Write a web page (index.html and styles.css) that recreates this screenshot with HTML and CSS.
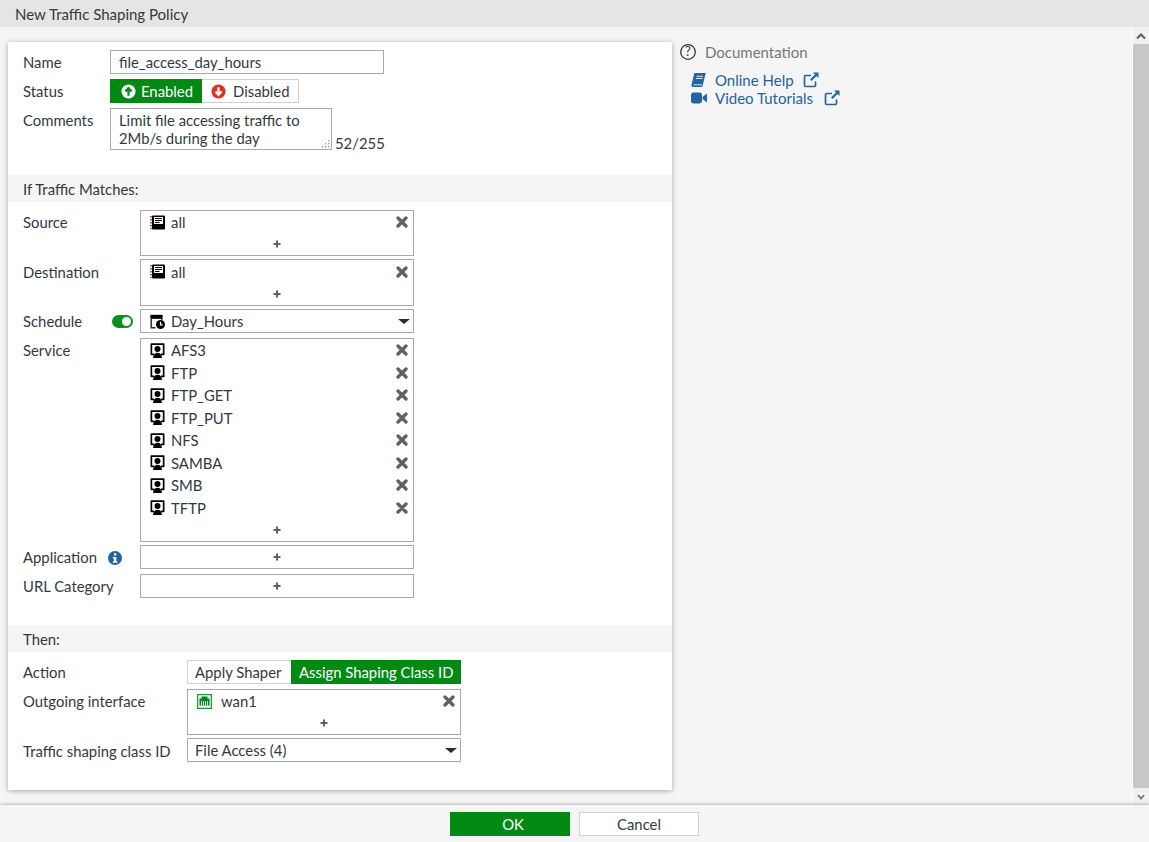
FILE: index.html
```html
<!DOCTYPE html>
<html lang="en">
<head>
<meta charset="utf-8">
<title>New Traffic Shaping Policy</title>
<link rel="stylesheet" href="styles.css">
</head>
<body>
<svg class="defs" width="0" height="0" aria-hidden="true">
  <symbol id="i-x" viewBox="0 0 12 12"><path d="M2 2 10 10M10 2 2 10" fill="none" stroke="#5c6268" stroke-width="3.300" stroke-linecap="round"/></symbol>
  <symbol id="i-plus" viewBox="0 0 8 8"><path d="M4 .5v7M.5 4h7" fill="none" stroke="#5c6268" stroke-width="2"/></symbol>
  <symbol id="i-addr" viewBox="0 0 15 15"><rect x="2" y="0.500" width="13" height="14" rx="1" fill="#000"/><rect x="4" y="2" width="9" height="7" fill="#fff"/><path d="M5 3.500h7M5 5.500h7M5 7.500h4.500" stroke="#000" stroke-width="1"/><path d="M1 1v13" stroke="#a020a0" stroke-width="1.600" stroke-dasharray="1.600 1.400"/></symbol>
  <symbol id="i-svc" viewBox="0 0 15 15"><path d="M.5 1a.8.8 0 0 1 .8-.8h12.400a.8.8 0 0 1 .8.8v10.500a.8.8 0 0 1-.8.8H11V10.500h1.800V2H2.200v8.500H4v1.800H1.300a.8.8 0 0 1-.8-.8z" fill="#000"/><circle cx="7.500" cy="6" r="3" fill="#000"/><path d="M3 15c.3-3.600 2-5.300 4.500-5.300S11.700 11.400 12 15z" fill="#000"/></symbol>
  <symbol id="i-sch" viewBox="0 0 15 15"><path d="M.5 1.500h12v5h-1.400V5H1.900v8h3.500v1.400H.5z" fill="#2a1a4a"/><rect x=".5" y=".8" width="12" height="3" fill="#000"/><circle cx="10.500" cy="10.500" r="4.500" fill="#000"/><path d="M10.500 7.800v3h2.200" fill="none" stroke="#fff" stroke-width="1.200"/></symbol>
  <symbol id="i-wan" viewBox="0 0 15 15"><rect x=".6" y=".6" width="13.800" height="13.800" fill="#e8f7ea" stroke="#1d9a33" stroke-width="1.200"/><path d="M2.500 11.500V4.500h2v-2h6v2h2v7z" fill="#0f7f24"/><path d="M4.500 7v4.500M6.500 7v4.500M8.500 7v4.500M10.500 7v4.500" stroke="#d8f0dc" stroke-width=".9"/></symbol>
  <symbol id="i-ext" viewBox="0 0 16 16"><path d="M12.500 9.500v3.500a1.500 1.500 0 0 1-1.500 1.500H3A1.500 1.500 0 0 1 1.500 13V5A1.500 1.500 0 0 1 3 3.500h5" fill="none" stroke="#22659f" stroke-width="1.700"/><path d="M10 .5h5.500V6l-2-2-5 5-1.500-1.500 5-5z" fill="#22659f"/></symbol>
</svg>

<header class="titlebar">New Traffic Shaping Policy</header>

<div class="main">
  <form class="card">
    <section class="block block-top">
      <div class="row gap5">
        <label class="lbl">Name</label>
        <input class="field name-input" type="text" value="file_access_day_hours">
      </div>
      <div class="row gap5">
        <span class="lbl">Status</span>
        <div class="seg">
          <span class="seg-btn on status-on">
            <svg class="seg-ico" viewBox="0 0 16 16"><circle cx="8" cy="8" r="7.500" fill="#fff"/><path d="M8 12.500V5M4.700 8 8 4.500 11.300 8" fill="none" stroke="#008a14" stroke-width="2.400"/></svg>
            Enabled</span>
          <span class="seg-btn status-off">
            <svg class="seg-ico" viewBox="0 0 16 16"><circle cx="8" cy="8" r="7.500" fill="#dc3020"/><path d="M8 3.500V11M4.700 8 8 11.500 11.300 8" fill="none" stroke="#fff" stroke-width="2.400"/></svg>
            Disabled</span>
        </div>
      </div>
      <div class="row">
        <label class="lbl">Comments</label>
        <div class="comment-wrap">
          <div class="comment-box">
            <textarea class="field comment">Limit file accessing traffic to 2Mb/s during the day</textarea>
            <svg class="grip" viewBox="0 0 9 9"><path d="M7 1h1.400v1.400H7zM4 4h1.400v1.400H4zM7 4h1.400v1.400H7zM1 7h1.400v1.400H1zM4 7h1.400v1.400H4zM7 7h1.400v1.400H7z" fill="#a0a0a0"/></svg>
          </div>
          <span class="count">52/255</span>
        </div>
      </div>
    </section>

    <h2 class="bar bar-match">If Traffic Matches:</h2>
    <section class="block block-match">
      <div class="row gap3">
        <span class="lbl">Source</span>
        <div class="multi h46">
          <div class="item"><svg class="ico"><use href="#i-addr"/></svg><span class="item-name">all</span><svg class="x"><use href="#i-x"/></svg></div>
          <div class="add"><svg class="plus"><use href="#i-plus"/></svg></div>
        </div>
      </div>
      <div class="row gap3">
        <span class="lbl lbl-low">Destination</span>
        <div class="multi h47">
          <div class="item item-low"><svg class="ico"><use href="#i-addr"/></svg><span class="item-name">all</span><svg class="x"><use href="#i-x"/></svg></div>
          <div class="add"><svg class="plus"><use href="#i-plus"/></svg></div>
        </div>
      </div>
      <div class="row gap5">
        <span class="lbl lbl-extra">Schedule <span class="toggle"></span></span>
        <div class="select"><svg class="ico"><use href="#i-sch"/></svg><span class="item-name">Day_Hours</span><span class="caret"></span></div>
      </div>
      <div class="row gap3">
        <span class="lbl">Service</span>
        <div class="multi h204">
          <div class="item"><svg class="ico"><use href="#i-svc"/></svg><span class="item-name">AFS3</span><svg class="x"><use href="#i-x"/></svg></div>
          <div class="item"><svg class="ico"><use href="#i-svc"/></svg><span class="item-name">FTP</span><svg class="x"><use href="#i-x"/></svg></div>
          <div class="item"><svg class="ico"><use href="#i-svc"/></svg><span class="item-name">FTP_GET</span><svg class="x"><use href="#i-x"/></svg></div>
          <div class="item"><svg class="ico"><use href="#i-svc"/></svg><span class="item-name">FTP_PUT</span><svg class="x"><use href="#i-x"/></svg></div>
          <div class="item"><svg class="ico"><use href="#i-svc"/></svg><span class="item-name">NFS</span><svg class="x"><use href="#i-x"/></svg></div>
          <div class="item"><svg class="ico"><use href="#i-svc"/></svg><span class="item-name">SAMBA</span><svg class="x"><use href="#i-x"/></svg></div>
          <div class="item"><svg class="ico"><use href="#i-svc"/></svg><span class="item-name">SMB</span><svg class="x"><use href="#i-x"/></svg></div>
          <div class="item"><svg class="ico"><use href="#i-svc"/></svg><span class="item-name">TFTP</span><svg class="x"><use href="#i-x"/></svg></div>
          <div class="add"><svg class="plus"><use href="#i-plus"/></svg></div>
        </div>
      </div>
      <div class="row gap5">
        <span class="lbl">Application
          <svg class="info" viewBox="0 0 14 14"><circle cx="7" cy="7" r="7" fill="#22659f"/><rect x="5.900" y="2.300" width="2.400" height="2.200" fill="#fff"/><path d="M4.800 6h3.500v4.300h1.100v1.500H4.800v-1.500h1.100V7.500H4.800z" fill="#fff"/></svg>
        </span>
        <div class="multi h24 empty"><svg class="plus"><use href="#i-plus"/></svg></div>
      </div>
      <div class="row">
        <span class="lbl">URL Category</span>
        <div class="multi h24 empty"><svg class="plus"><use href="#i-plus"/></svg></div>
      </div>
    </section>

    <h2 class="bar bar-then">Then:</h2>
    <section class="block block-then">
      <div class="row gap5">
        <span class="lbl">Action</span>
        <div class="seg">
          <span class="seg-btn action-off">Apply Shaper</span>
          <span class="seg-btn on action-on">Assign Shaping Class ID</span>
        </div>
      </div>
      <div class="row gap3">
        <span class="lbl">Outgoing interface</span>
        <div class="multi h46">
          <div class="item"><svg class="ico ico-wan"><use href="#i-wan"/></svg><span class="item-name">wan1</span><svg class="x"><use href="#i-x"/></svg></div>
          <div class="add"><svg class="plus"><use href="#i-plus"/></svg></div>
        </div>
      </div>
      <div class="row">
        <span class="lbl lbl-low">Traffic shaping class ID</span>
        <div class="select select-plain"><span class="item-name">File Access (4)</span><span class="caret"></span></div>
      </div>
    </section>
  </form>

  <aside class="docs">
    <div class="docs-head">
      <svg class="q" viewBox="0 0 16 16"><circle cx="8" cy="8" r="7.300" fill="none" stroke="#333" stroke-width="1.300"/><text x="8" y="12.300" text-anchor="middle" class="q-text">?</text></svg>
      <span>Documentation</span>
    </div>
    <a class="doc-link" href="#">
      <svg class="doc-ico" viewBox="0 0 16 16"><path d="M4 1h11l-.6 1.300-2.700 11.200c-.2.900-.8 1.500-1.800 1.500H2c-1.200 0-1.800-1-1.500-2.200L3 2.300C3.200 1.500 3.500 1 4 1z" fill="#22659f"/><path d="M5.500 4.300h6.500M5 6.500h6.500M2.600 12.800h8.500" stroke="#f5f5f5" stroke-width=".9"/></svg>
      <span>Online Help</span>
      <svg class="ext"><use href="#i-ext"/></svg>
    </a>
    <a class="doc-link link-video" href="#">
      <svg class="doc-ico" viewBox="0 0 16 16"><rect x="0" y="2.500" width="11" height="11" rx="2.400" fill="#22659f"/><path d="M11.500 7 16 3.500v9L11.500 9z" fill="#22659f"/></svg>
      <span>Video Tutorials</span>
      <svg class="ext"><use href="#i-ext"/></svg>
    </a>
  </aside>

  <div class="scroll">
    <div class="arrow"><svg viewBox="0 0 10 8" class="arrow-ico"><path d="M1 6.500 5 2.500l4 4" fill="none" stroke="#5c5c5c" stroke-width="2"/></svg></div>
    <div class="thumb"></div>
    <div class="arrow"><svg viewBox="0 0 10 8" class="arrow-ico"><path d="M2 2l3 3.500L8 2" fill="none" stroke="#777" stroke-width="1.800"/></svg></div>
  </div>
</div>

<footer class="footer">
  <button class="btn btn-ok" type="button">OK</button>
  <button class="btn" type="button">Cancel</button>
</footer>
</body>
</html>
```
FILE: styles.css
```css
* { box-sizing: border-box; }
html, body { height: 100%; }
body {
  margin: 0;
  height: 842px;
  overflow: hidden;
  display: flex;
  flex-direction: column;
  background: #f5f5f5;
  color: #2f3a40;
  font: 14.850px/18px Lato, "Open Sans", sans-serif;
}
.defs { position: absolute; }

.titlebar {
  height: 27px;
  flex: none;
  padding: 5px 15px 0;
  background: #e5e5e5;
  font-size: 15px;
}

.main { flex: 1; display: flex; min-height: 0; }

.card {
  flex: none;
  width: 664px;
  height: 748px;
  margin: 15px 0 0 8px;
  padding-top: 8px;
  background: #fff;
  box-shadow: 0 1px 5px rgba(0, 0, 0, .32);
}

.block { padding: 0 15px; }
.block-top { --col: 87px; padding-bottom: 25px; }
.block-match { --col: 117px; padding-top: 8px; padding-bottom: 27px; }
.block-then { --col: 164px; padding-top: 8px; }

.row { display: flex; align-items: flex-start; }
.gap5 { margin-bottom: 5px; }
.gap3 { margin-bottom: 3px; }

.lbl {
  flex: none;
  width: var(--col);
  height: 24px;
  line-height: 24px;
  white-space: nowrap;
}
.lbl-low { padding-top: 1px; }
.lbl-extra { display: flex; justify-content: space-between; align-items: center; padding-right: 7px; }

.field {
  display: block;
  border: 1px solid #a9a9a9;
  border-radius: 0;
  background: #fff;
  color: inherit;
  font: inherit;
  outline: none;
}
.name-input { width: 274px; height: 24px; padding: 0 8px; }

.comment-wrap { display: flex; align-items: flex-end; }
.comment-box { position: relative; }
.comment { width: 222px; height: 42px; padding: 2px 8px 0; resize: none; overflow: hidden; }
.grip { position: absolute; right: 2px; bottom: 2px; width: 9px; height: 9px; }
.count { margin: 0 0 -1px 3px; line-height: 16px; }

.seg { display: flex; height: 24px; }
.seg-btn {
  display: flex;
  align-items: center;
  height: 24px;
  border: 1px solid #d0d0d0;
  background: #fff;
  white-space: nowrap;
}
.seg-btn.on { background: #008a14; border-color: #008a14; color: #fff; }
.seg-ico { width: 15px; height: 15px; flex: none; }
.status-on { width: 92px; padding-left: 10px; gap: 5px; }
.status-off { width: 97px; border-left: 0; padding-left: 9px; gap: 7px; }
.action-off { width: 104px; padding-left: 7px; border-right: 0; }
.action-on { width: 170px; padding-left: 7px; }

.bar {
  height: 27px;
  margin: 0;
  padding: 5px 15px 0;
  background: #f5f5f5;
  font: inherit;
}

.multi {
  width: 274px;
  border: 1px solid #a9a9a9;
  background: #fff;
}
.h46 { height: 46px; }
.h47 { height: 47px; }
.h47 .add { height: 23px; }
.h204 { height: 204px; }
.h24 { height: 24px; }
.empty { display: flex; align-items: center; justify-content: center; }

.item {
  display: flex;
  align-items: center;
  height: 22.500px;
  padding: 0 5px 0 9px;
}
.item-low { padding-top: 1px; }
.item-name { flex: 1; white-space: nowrap; }
.ico { width: 15px; height: 15px; flex: none; margin-right: 6px; }
.ico-wan { margin-right: 9px; }
.x { width: 12px; height: 12px; flex: none; }
.add { display: flex; justify-content: center; align-items: center; height: 21px; }
.plus { width: 8px; height: 8px; }

.select {
  display: flex;
  align-items: center;
  width: 274px;
  height: 24px;
  padding: 0 3px 0 8px;
  border: 1px solid #a9a9a9;
  background: #fff;
}
.select-plain { padding-left: 7px; }
.select .ico { margin-left: 1px; }
.caret {
  width: 0;
  height: 0;
  border: 6px solid transparent;
  border-top: 5px solid #2b2b2b;
  border-bottom: 0;
  flex: none;
}

.toggle {
  position: relative;
  width: 21px;
  height: 13px;
  border-radius: 7px;
  background: #0a8f1e;
}
.toggle::after {
  content: "";
  position: absolute;
  right: 2px;
  top: 2px;
  width: 9px;
  height: 9px;
  border-radius: 50%;
  background: #fff;
}
.info { width: 14px; height: 14px; margin-left: 7px; vertical-align: -2px; }

.docs { flex: 1; margin-left: 8px; padding-top: 16px; font-size: 15px; }
.docs-head { display: flex; align-items: center; gap: 9px; height: 18px; color: #777; margin-bottom: 10px; }
.q { width: 16px; height: 16px; }
.q-text { font: 13px Lato, sans-serif; fill: #333; }
.doc-link {
  display: flex;
  align-items: center;
  height: 18px;
  margin-left: 11px;
  color: #22639b;
  text-decoration: none;
}
.doc-ico { width: 16px; height: 16px; margin-right: 8px; flex: none; }
.ext { width: 16px; height: 16px; margin-left: 9px; }
.link-video .ext { margin-left: 11px; }

.scroll { flex: none; width: 17px; display: flex; flex-direction: column; border-left: 1px solid #fff; }
.arrow { height: 17px; display: flex; align-items: center; justify-content: center; background: #f1f1f1; flex: none; }
.arrow-ico { width: 10px; height: 8px; }
.thumb { flex: 1; background: #c8c8c8; }

.footer {
  flex: none;
  height: 37px;
  display: flex;
  justify-content: center;
  gap: 9px;
  padding-top: 7px;
  background: #f5f5f5;
  box-shadow: 0 -1px 3px rgba(0, 0, 0, .25);
  position: relative;
}
.btn {
  width: 120px;
  height: 24px;
  padding: 0;
  border: 1px solid #d0d0d0;
  background: #fff;
  color: inherit;
  font: inherit;
}
.btn-ok { padding-left: 6px; background: #008a14; border-color: #008a14; color: #fff; }
```
